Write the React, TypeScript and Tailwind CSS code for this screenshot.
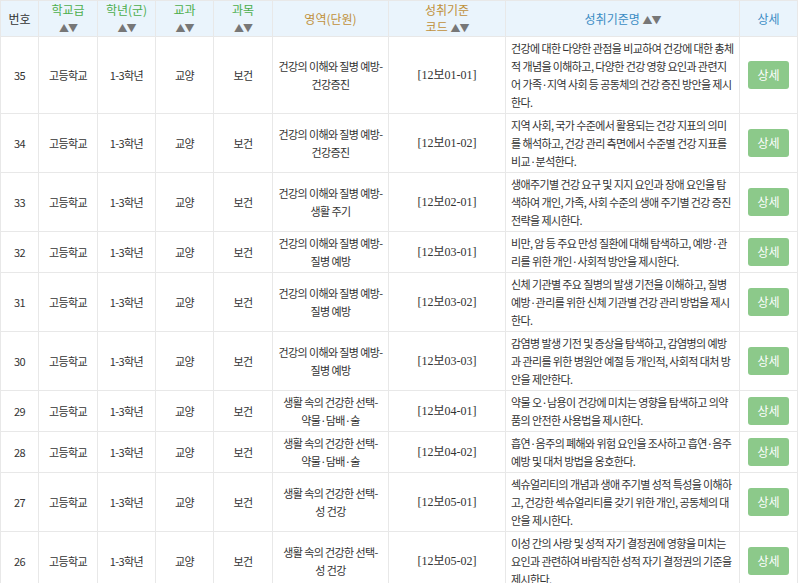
const rows = [
  ["35","건강의 이해와 질병 예방-건강증진","[12보01-01]","건강에 대한 다양한 관점을 비교하여 건강에 대한 총체적 개념을 이해하고, 다양한 건강 영향 요인과 관련지어 가족·지역 사회 등 공동체의 건강 증진 방안을 제시한다."],
  ["34","건강의 이해와 질병 예방-건강증진","[12보01-02]","지역 사회, 국가 수준에서 활용되는 건강 지표의 의미를 해석하고, 건강 관리 측면에서 수준별 건강 지표를 비교·분석한다."],
  ["33","건강의 이해와 질병 예방-생활 주기","[12보02-01]","생애주기별 건강 요구 및 지지 요인과 장애 요인을 탐색하여 개인, 가족, 사회 수준의 생애 주기별 건강 증진 전략을 제시한다."],
  ["32","건강의 이해와 질병 예방-질병 예방","[12보03-01]","비만, 암 등 주요 만성 질환에 대해 탐색하고, 예방·관리를 위한 개인·사회적 방안을 제시한다."],
  ["31","건강의 이해와 질병 예방-질병 예방","[12보03-02]","신체 기관별 주요 질병의 발생 기전을 이해하고, 질병 예방·관리를 위한 신체 기관별 건강 관리 방법을 제시한다."],
  ["30","건강의 이해와 질병 예방-질병 예방","[12보03-03]","감염병 발생 기전 및 증상을 탐색하고, 감염병의 예방과 관리를 위한 병원안 예절 등 개인적, 사회적 대처 방안을 제안한다."],
  ["29","생활 속의 건강한 선택-약물·담배·술","[12보04-01]","약물 오·남용이 건강에 미치는 영향을 탐색하고 의약품의 안전한 사용법을 제시한다."],
  ["28","생활 속의 건강한 선택-약물·담배·술","[12보04-02]","흡연·음주의 폐해와 위험 요인을 조사하고 흡연·음주 예방 및 대처 방법을 옹호한다."],
  ["27","생활 속의 건강한 선택-성 건강","[12보05-01]","섹슈얼리티의 개념과 생애 주기별 성적 특성을 이해하고, 건강한 섹슈얼리티를 갖기 위한 개인, 공동체의 대안을 제시한다."],
  ["26","생활 속의 건강한 선택-성 건강","[12보05-02]","이성 간의 사랑 및 성적 자기 결정권에 영향을 미치는 요인과 관련하여 바람직한 성적 자기 결정권의 기준을 제시한다."],
];
const Arr = () => <span className="text-[#777] text-[10px] tracking-[-1px]">▲▼</span>;
export default function App() {
  const td = "border border-[#e8e8e8] text-center align-middle";
  return (
    <div className="w-[800px] h-[583px] overflow-hidden bg-white text-[11px] text-[#333] leading-[18px] tracking-[-0.6px]" style={{fontFamily:'"Noto Sans CJK KR","Noto Sans",sans-serif'}}>
      <table className="border-collapse table-fixed w-[797px]">
        <colgroup>
          <col className="w-[38px]"/><col className="w-[59px]"/><col className="w-[58px]"/><col className="w-[58px]"/><col className="w-[59px]"/><col className="w-[116px]"/><col className="w-[117px]"/><col className="w-[234px]"/><col className="w-[58px]"/>
        </colgroup>
        <thead>
          <tr className="bg-[#eaf4fc] h-[36px] text-[12px] leading-[17px] tracking-normal">
            <th className={td+" font-normal text-[#333]"}>번호</th>
            {["학교급","학년(군)","교과","과목"].map(h=><th key={h} className={td+" font-normal text-[#4cae4c]"}>{h}<br/><Arr/></th>)}
            <th className={td+" font-normal text-[#c0903a]"}>영역(단원)</th>
            <th className={td+" font-normal text-[#c0903a]"}>성취기준<br/>코드 <Arr/></th>
            <th className={td+" font-normal text-[#3a8cc4]"}>성취기준명 <Arr/></th>
            <th className={td+" font-normal text-[#3a8cc4]"}>상세</th>
          </tr>
        </thead>
        <tbody>
          {rows.map(r=>{
            const i = r[1].indexOf("-")+1;
            return (
            <tr key={r[0]} className="h-[41px]">
              <td className={td}>{r[0]}</td>
              <td className={td}>고등학교</td>
              <td className={td}>1-3학년</td>
              <td className={td}>교양</td>
              <td className={td}>보건</td>
              <td className={td+" px-[2px]"}>{r[1].slice(0,i)}<br/>{r[1].slice(i)}</td>
              <td className={td+" text-[12px] text-[#333] tracking-normal"} style={{fontFamily:'"Liberation Serif","Noto Sans CJK KR",serif'}}>{r[2]}</td>
              <td className={td+" text-left px-[5px] py-[2px]"}>{r[3]}</td>
              <td className={td}><button className="bg-[#8cc98a] text-white text-[12px] tracking-normal rounded-[3px] w-[41px] h-[28px]">상세</button></td>
            </tr>
          );})}
        </tbody>
      </table>
    </div>
  );
}
